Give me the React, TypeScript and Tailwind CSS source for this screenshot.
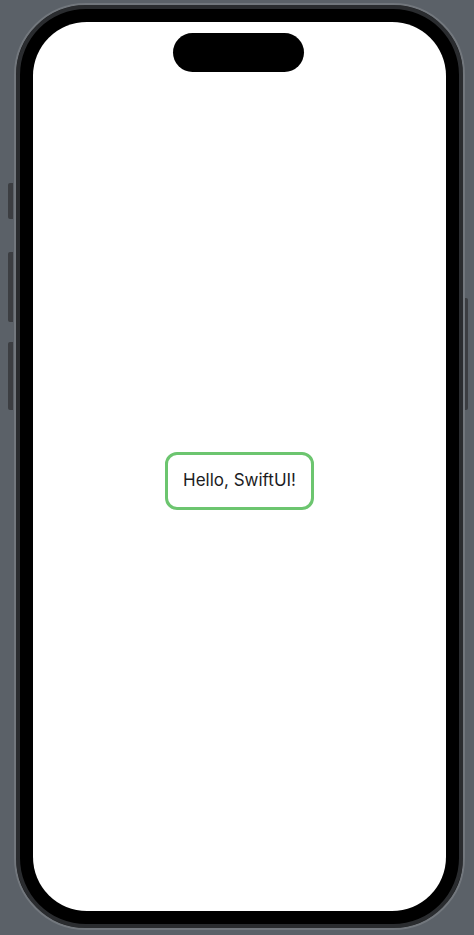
export default function App() {
   return (
      <div className="relative h-[935px] w-[474px] overflow-hidden bg-[#5b6168] pl-[14px] pt-[3px]">
         {/* side buttons */}
         <div className="absolute left-[8px] top-[183px] h-[36px] w-[5px] rounded-l-[2px] bg-[#3c3e42]" />
         <div className="absolute left-[8px] top-[252px] h-[70px] w-[5px] rounded-l-[2px] bg-[#3c3e42]" />
         <div className="absolute left-[8px] top-[342px] h-[68px] w-[5px] rounded-l-[2px] bg-[#3c3e42]" />
         <div className="absolute left-[463px] top-[298px] h-[112px] w-[5px] rounded-r-[2px] bg-[#3c3e42]" />

         <div className="relative h-[927px] w-[451px] rounded-[72px] border-2 border-[#72777d] bg-black p-[17px] shadow-[inset_0_0_0_4px_#2a2c2f]">
            <div className="relative flex h-full w-full flex-col items-center justify-center rounded-[54px] bg-white pt-[28px]">
               <div className="absolute left-[140px] top-[11px] h-[39px] w-[131px] rounded-full bg-black" />
               <button className="flex h-[58px] w-[149px] items-center justify-center rounded-[12px] border-[3px] border-[#6cc56f] bg-white font-['Inter','Liberation_Sans',sans-serif] text-[17px] text-[#1c1c1e]">
                  Hello, SwiftUI!
               </button>
            </div>
         </div>
      </div>
   )
}
